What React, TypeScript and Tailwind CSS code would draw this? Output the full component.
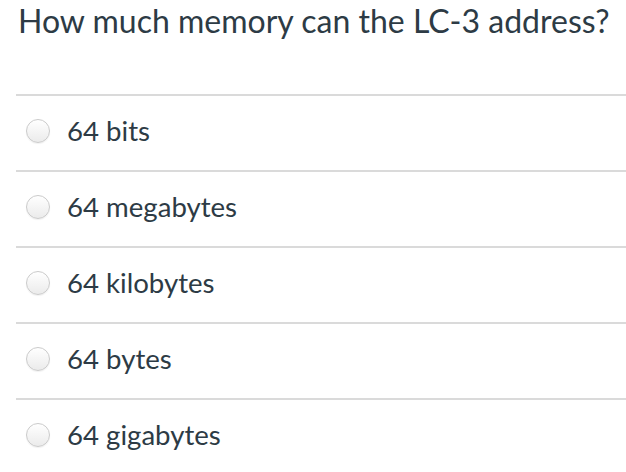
import React from "react";

const answers = ["64 bits", "64 megabytes", "64 kilobytes", "64 bytes", "64 gigabytes"];

function Radio() {
  return (
    <span className="block w-[24px] h-[24px] shrink-0 rounded-full border border-[#cbcbcb] bg-gradient-to-b from-white to-[#ebebeb] shadow-[0_1px_1px_rgba(0,0,0,0.06)]" />
  );
}

export default function App() {
  return (
    <div className="w-[626px] h-[472px] bg-white pl-4 text-[#2d3b45] font-['Lato',sans-serif] overflow-hidden">
      <h1 className="pl-[2px] pt-[1px] text-[32px] leading-[40px] font-normal">How much memory can the LC-3 address?</h1>
      <div className="mt-[53px]">
        {answers.map((a) => (
          <div key={a} className="border-t-2 border-[#dadada] h-[76px] flex items-center pl-[10px] gap-[17px] pb-[4px]">
            <Radio />
            <span className="text-[27.6px] leading-[30px]">{a}</span>
          </div>
        ))}
      </div>
    </div>
  );
}
